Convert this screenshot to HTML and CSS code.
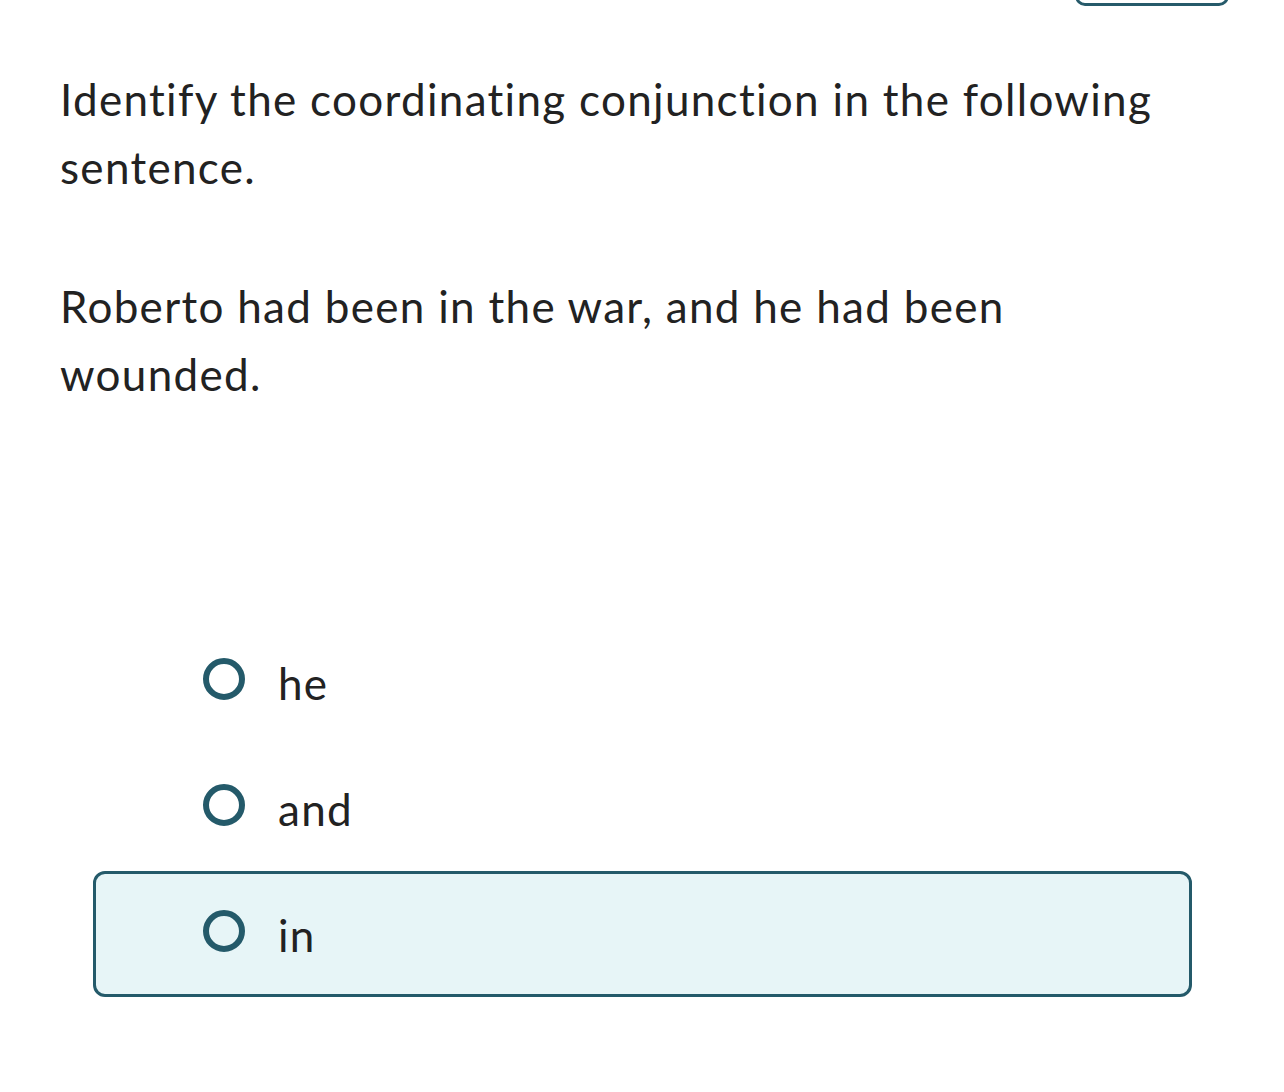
FILE: index.html
```html
<!DOCTYPE html>
<html>
<head>
<meta charset="utf-8">
<link rel="stylesheet" href="styles.css">
</head>
<body>
<div class="top"><button class="topbtn" aria-label="menu"></button></div>
<main class="question">
  <p class="prompt">Identify the coordinating conjunction in the following sentence.</p>
  <p class="prompt">Roberto had been in the war, and he had been wounded.</p>
</main>
<ul class="options">
  <li class="option"><span class="radio"></span><span class="label">he</span></li>
  <li class="option"><span class="radio"></span><span class="label">and</span></li>
  <li class="option selected"><span class="radio"></span><span class="label">in</span></li>
</ul>
</body>
</html>
```
FILE: styles.css
```css
html, body {
  margin: 0;
  padding: 0;
  background: #ffffff;
}
body {
  font-family: "Lato", "Liberation Sans", sans-serif;
  color: #222222;
  width: 1284px;
  height: 1092px;
  overflow: hidden;
}
.top {
  display: flex;
  justify-content: flex-end;
  height: 6px;
  padding-right: 55px;
}
.topbtn {
  width: 154px;
  height: 50px;
  margin-top: -44px;
  border: 3px solid #265a6a;
  border-radius: 10px;
  background: #ffffff;
  padding: 0;
}
.question {
  padding: 59px 0 0 60px;
  width: 1120px;
}
.prompt {
  margin: 0 0 71px 0;
  font-size: 44px;
  line-height: 68px;
  letter-spacing: 1.3px;
}
.options {
  list-style: none;
  margin: 211px 0 0 93px;
  padding: 0;
  width: 1099px;
  display: flex;
  flex-direction: column;
}
.option {
  box-sizing: border-box;
  height: 126px;
  display: flex;
  align-items: center;
  padding-left: 110px;
  border: 3px solid transparent;
  border-radius: 12px;
}
.option.selected {
  background: #e7f5f7;
  border-color: #245a6a;
}
.radio {
  box-sizing: border-box;
  width: 42px;
  height: 42px;
  border: 6.5px solid #245a6a;
  border-radius: 50%;
  margin-left: -3px;
  margin-bottom: 6px;
  flex: none;
}
.label {
  margin-left: 33px;
  font-size: 44px;
  line-height: 1;
  letter-spacing: 1.3px;
  padding-top: 2px;
}
```
